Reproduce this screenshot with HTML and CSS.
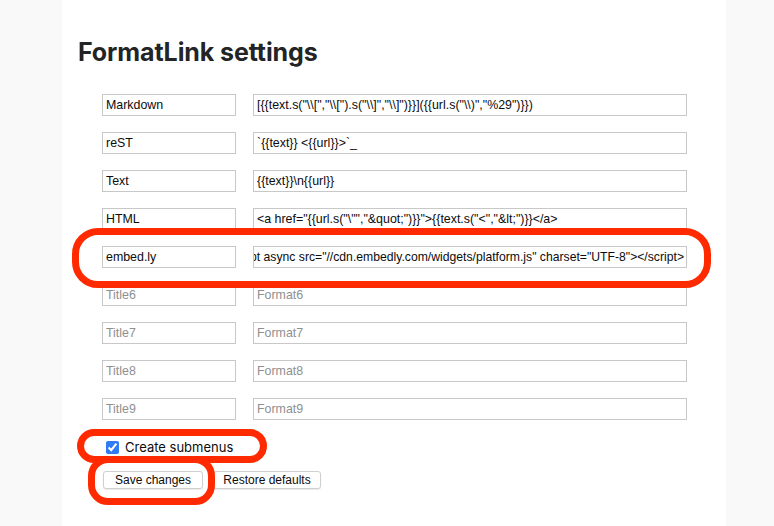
FILE: index.html
```html
<!DOCTYPE html>
<html lang="en">
<head>
<meta charset="utf-8">
<title>FormatLink settings</title>
<link rel="stylesheet" href="styles.css">
</head>
<body>
<main class="panel">
  <h1 class="title">FormatLink settings</h1>
  <div class="formats">
    <input class="field name" value="Markdown">
    <input class="field fmt" value="[{{text.s(&quot;\\[&quot;,&quot;\\[&quot;).s(&quot;\\]&quot;,&quot;\\]&quot;)}}]({{url.s(&quot;\\)&quot;,&quot;%29&quot;)}})">
    <input class="field name" value="reST">
    <input class="field fmt" value="`{{text}} &lt;{{url}}&gt;`_">
    <input class="field name" value="Text">
    <input class="field fmt" value="{{text}}\n{{url}}">
    <input class="field name" value="HTML">
    <input class="field fmt" value="&lt;a href=&quot;{{url.s(&quot;\&quot;&quot;,&quot;&amp;quot;&quot;)}}&quot;&gt;{{text.s(&quot;&lt;&quot;,&quot;&amp;lt;&quot;)}}&lt;/a&gt;">
    <input class="field name" value="embed.ly">
    <div class="field fmt scrolled"><span>&lt;blockquote class=&quot;embedly-card&quot;&gt;&lt;h4&gt;&lt;a href=&quot;{{url}}&quot;&gt;{{text}}&lt;/a&gt;&lt;/h4&gt;&lt;/blockquote&gt;&lt;script async src=&quot;//cdn.embedly.com/widgets/platform.js&quot; charset=&quot;UTF-8&quot;&gt;&lt;/script&gt;</span></div>
    <input class="field name" placeholder="Title6">
    <input class="field fmt" placeholder="Format6">
    <input class="field name" placeholder="Title7">
    <input class="field fmt" placeholder="Format7">
    <input class="field name" placeholder="Title8">
    <input class="field fmt" placeholder="Format8">
    <input class="field name" placeholder="Title9">
    <input class="field fmt" placeholder="Format9">
  </div>
  <label class="submenus"><input type="checkbox" class="check" checked><span>Create submenus</span></label>
  <div class="buttons">
    <button class="btn">Save changes</button>
    <button class="btn">Restore defaults</button>
  </div>
</main>
<div class="mark mark-row"></div>
<div class="mark mark-check"></div>
<div class="mark mark-save"></div>
</body>
</html>
```
FILE: styles.css
```css
html, body {
  margin: 0;
  padding: 0;
  height: 100%;
}
body {
  background: #f9f9fa;
  font-family: Inter, "Noto Sans", sans-serif;
  color: #0c0c0d;
  overflow: hidden;
}
.panel {
  box-sizing: border-box;
  width: 664px;
  height: 100%;
  margin-left: 62px;
  background: #ffffff;
  padding: 34px 16px 0 16px;
}
.title {
  margin: 0 0 24px 0;
  font-size: 25px;
  line-height: 36px;
  font-weight: 700;
  color: #222426;
  letter-spacing: -0.1px;
}
.formats {
  display: grid;
  grid-template-columns: 134px 434px;
  column-gap: 17px;
  row-gap: 16px;
  margin-left: 24px;
}
.field {
  box-sizing: border-box;
  height: 22px;
  margin: 0;
  border: 1px solid #c8c8c8;
  border-radius: 0;
  padding: 0 3px;
  font-family: "Liberation Sans", Arial, sans-serif;
  font-size: 12.4px;
  color: #0c0c0d;
  background: #fff;
  outline: none;
}
.field::placeholder {
  color: #8f8f8f;
}
.scrolled {
  display: flex;
  align-items: center;
  justify-content: flex-end;
  overflow: hidden;
  white-space: nowrap;
  padding-right: 2px;
  font-size: 12.2px;
}
.scrolled span {
  flex: none;
}
.submenus {
  display: flex;
  align-items: center;
  gap: 6px;
  margin: 19px 0 0 28px;
  font-size: 13px;
  color: #0c0c0d;
}
.check {
  width: 13px;
  height: 13px;
  margin: 0;
  accent-color: #2f7bf5;
}
.buttons {
  display: flex;
  gap: 10px;
  margin: 16px 0 0 25px;
}
.btn {
  box-sizing: border-box;
  height: 18px;
  padding: 0;
  border: 1px solid #cfcfcf;
  border-radius: 3px;
  background: #fff;
  box-shadow: 0 1px 1px rgba(0,0,0,0.08);
  font-family: "Liberation Sans", Arial, sans-serif;
  font-size: 12px;
  line-height: 16px;
  color: #0c0c0d;
}
.btn:first-child { width: 100px; }
.btn:last-child { width: 108px; }
.mark {
  position: absolute;
  box-sizing: border-box;
  border: 7px solid #ff2a00;
}
.mark-row {
  left: 72px;
  top: 228px;
  width: 639px;
  height: 60px;
  border-radius: 26px;
}
.mark-check {
  left: 77px;
  top: 429px;
  width: 190px;
  height: 34px;
  border-radius: 17px;
}
.mark-save {
  left: 88px;
  top: 456px;
  width: 127px;
  height: 49px;
  border-radius: 20px;
}
```
